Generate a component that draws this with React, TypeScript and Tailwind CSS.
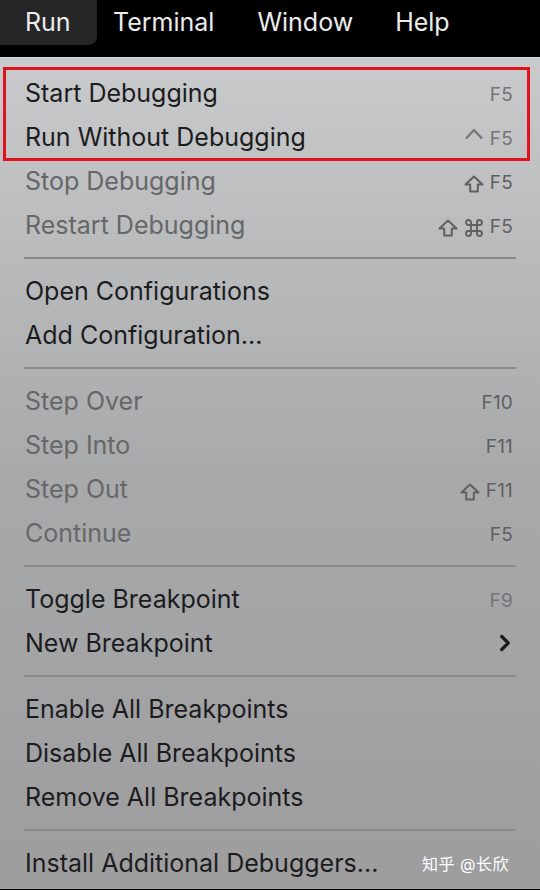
import { ChevronRight } from "lucide-react";

type Item = {
  label: string;
  keys?: string[];
  disabled?: boolean;
  submenu?: boolean;
};

const groups: Item[][] = [
  [
    { label: "Start Debugging", keys: ["F5"] },
    { label: "Run Without Debugging", keys: ["ctrl", "F5"] },
    { label: "Stop Debugging", keys: ["shift", "F5"], disabled: true },
    { label: "Restart Debugging", keys: ["shift", "cmd", "F5"], disabled: true },
  ],
  [{ label: "Open Configurations" }, { label: "Add Configuration..." }],
  [
    { label: "Step Over", keys: ["F10"], disabled: true },
    { label: "Step Into", keys: ["F11"], disabled: true },
    { label: "Step Out", keys: ["shift", "F11"], disabled: true },
    { label: "Continue", keys: ["F5"], disabled: true },
  ],
  [
    { label: "Toggle Breakpoint", keys: ["F9"] },
    { label: "New Breakpoint", submenu: true },
  ],
  [
    { label: "Enable All Breakpoints" },
    { label: "Disable All Breakpoints" },
    { label: "Remove All Breakpoints" },
  ],
  [{ label: "Install Additional Debuggers..." }],
];

function ShiftIcon() {
  return (
    <svg width="20" height="18" viewBox="0 0 20 18" fill="none">
      <path
        d="M10 1.5 L18.5 9.5 H13.8 V16.5 H6.2 V9.5 H1.5 Z"
        stroke="currentColor"
        strokeWidth="2"
        strokeLinejoin="round"
      />
    </svg>
  );
}

function CmdIcon() {
  return (
    <svg width="20" height="20" viewBox="0 0 20 20" fill="none">
      <path
        d="M7 7 H13 V13 H7 Z M7 7 V4.5 A2.5 2.5 0 1 0 4.5 7 H7 M13 7 V4.5 A2.5 2.5 0 1 1 15.5 7 H13 M7 13 V15.5 A2.5 2.5 0 1 1 4.5 13 H7 M13 13 V15.5 A2.5 2.5 0 1 0 15.5 13 H13"
        stroke="currentColor"
        strokeWidth="1.9"
      />
    </svg>
  );
}

function CtrlIcon() {
  return (
    <svg width="20" height="12" viewBox="0 0 20 12" fill="none">
      <path d="M2 10.5 L10 2 L18 10.5" stroke="currentColor" strokeWidth="2.2" />
    </svg>
  );
}

function Key({ k }: { k: string }) {
  if (k === "shift") return <ShiftIcon />;
  if (k === "cmd") return <CmdIcon />;
  if (k === "ctrl")
    return (
      <span className="mb-[12px]">
        <CtrlIcon />
      </span>
    );
  return <span className="text-[19px] tracking-[0.2px]">{k}</span>;
}

function Row({ item }: { item: Item }) {
  return (
    <div className="h-[44px] flex items-center justify-between pl-[25px] pr-[27px]">
      <span
        className={`text-[25px] leading-none ${
          item.disabled ? "text-[#666769]" : "text-[#1c1c1e]"
        }`}
      >
        {item.label}
      </span>
      {item.keys && (
        <span
          className={`flex items-center gap-[6px] mt-[5px] ${
            item.disabled ? "text-[#5f6062]" : "text-[#747577]"
          }`}
        >
          {item.keys.map((k, i) => (
            <Key key={i} k={k} />
          ))}
        </span>
      )}
      {item.submenu && (
        <ChevronRight size={26} strokeWidth={3} className="text-[#1c1c1e] mr-[-5px]" />
      )}
    </div>
  );
}

export default function App() {
  return (
    <div
      className="relative w-[540px] h-[890px] overflow-hidden bg-black"
      style={{ fontFamily: "Inter, 'Noto Sans CJK SC', sans-serif" }}
    >
      {/* menu bar */}
      <div className="h-[57px] bg-black flex items-start text-[25px] text-[#ececec]">
        <div className="h-[45px] w-[97px] bg-[#262626] rounded-br-[8px] flex items-center pl-[25px]">
          Run
        </div>
        <div className="h-[45px] flex items-center ml-[16px]">Terminal</div>
        <div className="h-[45px] flex items-center ml-[43px]">Window</div>
        <div className="h-[45px] flex items-center ml-[42px]">Help</div>
      </div>

      {/* dropdown */}
      <div className="border-t border-[#d6d7d9] bg-gradient-to-b from-[#c9cacc] via-[#a8a9ab] to-[#9d9d9e] pt-[13px] h-[832px]">
        {groups.map((g, gi) => (
          <div key={gi}>
            {gi > 0 && (
              <div className="h-[22px] flex items-center px-[24px]">
                <div className="h-[2px] w-full bg-[#8a8b8d]" />
              </div>
            )}
            {g.map((item) => (
              <Row key={item.label} item={item} />
            ))}
          </div>
        ))}
      </div>

      {/* red highlight annotation */}
      <div className="absolute left-[3px] top-[67px] w-[527px] h-[94px] border-[3px] border-[#e2121c] pointer-events-none" />

      {/* watermark */}
      <div className="absolute right-[31px] top-[852px] text-[16px] text-white tracking-[0.5px]">
        知乎 @长欣
      </div>
    </div>
  );
}
